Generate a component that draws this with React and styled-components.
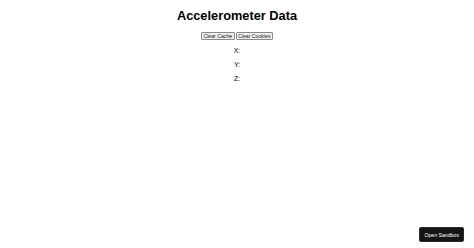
import styled, { createGlobalStyle } from "styled-components";

const GlobalStyle = createGlobalStyle`
  html, body {
    margin: 0;
    padding: 0;
    background: #fff;
  }
  body {
    font-family: "Liberation Sans", Arial, sans-serif;
    color: #000;
  }
`;

const Page = styled.div`
  display: flex;
  flex-direction: column;
  align-items: center;
  padding-top: 8px;
`;

const Title = styled.h1`
  margin: 0;
  font-size: 12.8px;
  line-height: 15px;
  font-weight: 700;
`;

const Toolbar = styled.div`
  display: flex;
  margin-top: 9px;
`;

const Button = styled.button`
  font-family: "Liberation Sans", Arial, sans-serif;
  font-size: 5.2px;
  line-height: 6px;
  height: 8px;
  padding: 0 1.5px;
  margin: 0 0.4px;
  border: 0.5px solid #8a8a8a;
  border-radius: 1px;
  background: #efefef;
  color: #222;
`;

const Axis = styled.p`
  margin: 0;
  font-size: 7px;
  line-height: 14px;
  &:first-of-type {
    margin-top: 4px;
  }
`;

const SandboxButton = styled.a`
  position: fixed;
  right: 10px;
  bottom: 6px;
  display: flex;
  align-items: center;
  height: 13px;
  padding: 0 4px;
  background: #151515;
  border: 0.5px solid #2a2a2a;
  border-radius: 2px;
  color: #fff;
  font-size: 5.2px;
  text-decoration: none;
`;

export default function App() {
  return (
    <>
      <GlobalStyle />
      <Page>
        <Title>Accelerometer Data</Title>
        <Toolbar>
          <Button>Clear Cache</Button>
          <Button>Clear Cookies</Button>
        </Toolbar>
        <Axis>X:</Axis>
        <Axis>Y:</Axis>
        <Axis>Z:</Axis>
      </Page>
      <SandboxButton href="#">Open Sandbox</SandboxButton>
    </>
  );
}
